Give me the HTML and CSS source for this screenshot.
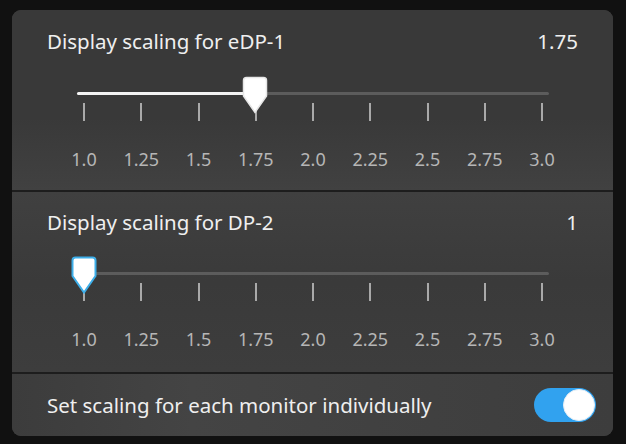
FILE: index.html
```html
<!DOCTYPE html>
<html lang="en">
    <head>
        <meta charset="UTF-8" />
        <meta name="viewport" content="width=device-width, initial-scale=1.0" />
        <title>Display scaling</title>
        <link rel="stylesheet" href="styles.css">
    </head>
    <body>
        <div class="panel">
            <div class="section first">
                <div class="row">
                    <span class="title">Display scaling for eDP-1</span>
                    <span class="value">1.75</span>
                </div>
                <div class="slider">
                    <div class="track">
                        <div class="fill" style="width: 178px"></div>
                        <svg class="handle" style="left: 165px" width="26" height="38" viewBox="0 0 26 38">
                            <path d="M4.5 1.5H21.5Q24.5 1.5 24.5 4.5V20L13 36.5L1.5 20V4.5Q1.5 1.5 4.5 1.5Z" fill="#fff" stroke="#e6e6e6" stroke-width="1.5" />
                        </svg>
                    </div>
                    <div class="ticks">
                        <span></span><span></span><span></span><span></span><span></span><span></span><span></span><span></span><span></span>
                    </div>
                    <div class="labels">
                        <span>1.0</span><span>1.25</span><span>1.5</span><span>1.75</span><span>2.0</span><span>2.25</span><span>2.5</span><span>2.75</span><span>3.0</span>
                    </div>
                </div>
            </div>
            <div class="section second">
                <div class="row">
                    <span class="title">Display scaling for DP-2</span>
                    <span class="value">1</span>
                </div>
                <div class="slider">
                    <div class="track">
                        <div class="fill" style="width: 0px"></div>
                        <svg class="handle" style="left: -6px" width="26" height="38" viewBox="0 0 26 38">
                            <path d="M4.5 1.5H21.5Q24.5 1.5 24.5 4.5V20L13 36.5L1.5 20V4.5Q1.5 1.5 4.5 1.5Z" fill="#fff" stroke="#3daee9" stroke-width="2" />
                        </svg>
                    </div>
                    <div class="ticks">
                        <span></span><span></span><span></span><span></span><span></span><span></span><span></span><span></span><span></span>
                    </div>
                    <div class="labels">
                        <span>1.0</span><span>1.25</span><span>1.5</span><span>1.75</span><span>2.0</span><span>2.25</span><span>2.5</span><span>2.75</span><span>3.0</span>
                    </div>
                </div>
            </div>
            <div class="section toggle-row">
                <span class="title">Set scaling for each monitor individually</span>
                <div class="switch on"><div class="knob"></div></div>
            </div>
        </div>
    </body>
</html>
```

FILE: styles.css
```css
* {
    margin: 0;
    padding: 0;
    box-sizing: border-box;
}
body {
    background-color: #111;
    padding: 10px 13px 8px 12px;
    font-family: "Noto Sans", "DejaVu Sans", sans-serif;
    color: #eee;
}
.panel {
    width: 601px;
    background-color: #3b3b3b;
    border-radius: 9px;
    overflow: hidden;
}

.section {
    padding: 17px 35px 19px 35px;
    height: 180px;
}
.section.first {
    background: linear-gradient(#393939 60%, #414141);
}
.section.second {
    border-top: 2px solid #1d1d1d;
    height: 182px;
    padding-top: 16px;
    background: linear-gradient(#404040, #3a3a3a 50%, #3d3d3d);
}

.row {
    display: flex;
    justify-content: space-between;
    align-items: center;
    height: 28px;
}
.title,
.value {
    font-size: 20.5px;
    line-height: 28px;
    color: #efefef;
}

.slider {
    margin: 37px 29px 0 30px;
}
.second .slider {
    margin-top: 36px;
}
.track {
    position: relative;
    height: 3px;
    border-radius: 2px;
    background-color: #5c5c5c;
}
.fill {
    height: 100%;
    border-radius: 2px;
    background-color: #f4f4f4;
}
.handle {
    position: absolute;
    top: -16px;
}

.ticks {
    display: flex;
    justify-content: space-between;
    padding: 0 6px;
    margin-top: 8px;
    height: 18px;
}
.ticks span {
    width: 2px;
    background-color: #a9a9a9;
}

.labels {
    display: flex;
    justify-content: space-between;
    padding: 0 7px;
    margin-top: 26px;
}
.labels span {
    width: 0;
    display: flex;
    justify-content: center;
    white-space: nowrap;
    font-size: 18px;
    line-height: 24px;
    color: #b6b6b6;
}

.toggle-row {
    border-top: 2px solid #1d1d1d;
    height: 64px;
    padding: 0 17px 0 35px;
    display: flex;
    align-items: center;
    justify-content: space-between;
    background: linear-gradient(90deg, #3c3c3c, #444 30%, #3d3d3d);
}
.switch {
    width: 62px;
    height: 34px;
    border-radius: 17px;
    background-color: #31a2ef;
    display: flex;
    align-items: center;
    justify-content: flex-end;
    padding-right: 1px;
}
.knob {
    width: 32px;
    height: 32px;
    border-radius: 50%;
    background-color: #fff;
    border: 1px solid #e4eef6;
}
```
